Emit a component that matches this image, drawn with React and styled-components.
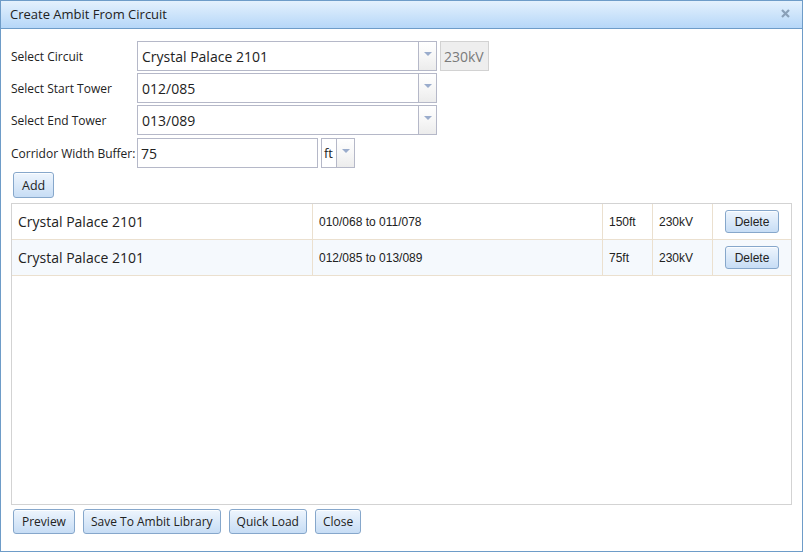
import React from "react";
import styled, { createGlobalStyle } from "styled-components";

const Global = createGlobalStyle`
  html, body { margin: 0; padding: 0; background: #ffffff; }
  * { box-sizing: border-box; }
`;

const Window = styled.div`
  width: 803px;
  height: 552px;
  border: 1px solid #6e9cc8;
  display: flex;
  flex-direction: column;
  background: #ffffff;
  font-family: "Open Sans", "Noto Sans", sans-serif;
  color: #222;
`;

const TitleBar = styled.div`
  height: 28px;
  flex: none;
  display: flex;
  align-items: center;
  justify-content: space-between;
  padding: 0 10px 1px 9px;
  background: linear-gradient(#e4f1fd, #b6d7f8);
  border-bottom: 1px solid #6e9cc8;
  font-size: 13px;
`;

const CloseX = styled.svg`
  width: 9px;
  height: 9px;
  margin-right: 2px;
  margin-top: -2px;
`;

const Body = styled.div`
  flex: 1;
  display: flex;
  flex-direction: column;
  padding: 12px 10px 17px 10px;
  min-height: 0;
`;

const FormRow = styled.div`
  display: flex;
  align-items: center;
  height: 30px;
  margin-bottom: ${(p) => p.$gap ?? 2}px;
`;

const Label = styled.div`
  width: 126px;
  flex: none;
  font-size: 12px;
  white-space: nowrap;
`;

const Field = styled.div`
  display: flex;
  width: ${(p) => p.$w}px;
  height: 30px;
  border: 1px solid #b5b8c8;
  background: #fff;
`;

const FieldText = styled.div`
  flex: 1;
  display: flex;
  align-items: center;
  padding-left: ${(p) => p.$pad ?? 4}px;
  font-size: ${(p) => p.$size ?? 14}px;
  white-space: nowrap;
  overflow: hidden;
`;

const Trigger = styled.div`
  width: 18px;
  flex: none;
  border-left: 1px solid #b5b8c8;
  background: linear-gradient(#ffffff 0%, #f7f7f7 50%, #ececec 100%);
  display: flex;
  justify-content: center;
  padding-top: 10px;
`;

const Arrow = () => (
  <svg width="8" height="4" viewBox="0 0 8 4">
    <path d="M0 0 L8 0 L4 4 Z" fill="#9aaccc" />
  </svg>
);

const Voltage = styled.div`
  margin-left: 3px;
  height: 30px;
  display: flex;
  align-items: center;
  padding: 0 4px 0 3px;
  background: #eeeeee;
  border: 1px solid #d2d2d2;
  color: #7a7a7a;
  font-size: 14px;
`;

const Unit = styled(Field)`
  margin-left: 3px;
`;

const Button = styled.button`
  font-family: ${(p) => (p.$arial ? '"Liberation Sans", Arial, sans-serif' : '"Open Sans", sans-serif')};
  font-size: ${(p) => p.$fs ?? 12}px;
  color: #222;
  height: ${(p) => p.$h ?? 25}px;
  padding: 0 ${(p) => p.$px ?? 8}px;
  border: 1px solid #86a7cb;
  border-radius: 3px;
  background: linear-gradient(#eef5fd, #c7ddf5);
  box-shadow: inset 0 1px 0 #fbfdff;
  cursor: pointer;
  white-space: nowrap;
`;

const AddRow = styled.div`
  margin: 4px 0 5px 2px;
  display: flex;
`;

const Grid = styled.div`
  flex: 1;
  border: 1px solid #d3d3d3;
  background: #fff;
  min-height: 0;
`;

const Row = styled.div`
  display: grid;
  grid-template-columns: 301px 290px 50px 60px 1fr;
  height: 36px;
  border-bottom: 1px solid #ebe0cf;
  background: ${(p) => (p.$alt ? "#f5f9fd" : "#ffffff")};
`;

const Cell = styled.div`
  display: flex;
  align-items: center;
  justify-content: ${(p) => (p.$center ? "center" : "flex-start")};
  padding-left: ${(p) => (p.$center ? 0 : 6)}px;
  border-right: ${(p) => (p.$last ? "none" : "1px solid #ebe0cf")};
  font-family: ${(p) => (p.$big ? '"Open Sans", sans-serif' : '"Liberation Sans", Arial, sans-serif')};
  font-size: ${(p) => (p.$big ? 14 : 12)}px;
  color: #222;
  white-space: nowrap;
`;

const Footer = styled.div`
  display: flex;
  gap: 8px;
  margin-top: 4px;
  padding-left: 2px;
`;

const rows = [
  { name: "Crystal Palace 2101", range: "010/068 to 011/078", buf: "150ft", kv: "230kV" },
  { name: "Crystal Palace 2101", range: "012/085 to 013/089", buf: "75ft", kv: "230kV" },
];

function Combo({ value, width }) {
  return (
    <Field $w={width}>
      <FieldText>{value}</FieldText>
      <Trigger>
        <Arrow />
      </Trigger>
    </Field>
  );
}

export default function App() {
  return (
    <>
      <Global />
      <Window>
        <TitleBar>
          <span>Create Ambit From Circuit</span>
          <CloseX viewBox="0 0 9 9">
            <path d="M1 1 L8 8 M8 1 L1 8" stroke="#8aa0b8" strokeWidth="2.2" />
          </CloseX>
        </TitleBar>
        <Body>
          <FormRow>
            <Label>Select Circuit</Label>
            <Combo value="Crystal Palace 2101" width={300} />
            <Voltage>230kV</Voltage>
          </FormRow>
          <FormRow>
            <Label>Select Start Tower</Label>
            <Combo value="012/085" width={300} />
          </FormRow>
          <FormRow $gap={3}>
            <Label>Select End Tower</Label>
            <Combo value="013/089" width={300} />
          </FormRow>
          <FormRow $gap={0}>
            <Label>Corridor Width Buffer:</Label>
            <Field $w={181}>
              <FieldText $pad={3}>75</FieldText>
            </Field>
            <Unit $w={34}>
              <FieldText $pad={2} $size={13}>ft</FieldText>
              <Trigger>
                <Arrow />
              </Trigger>
            </Unit>
          </FormRow>
          <AddRow>
            <Button $h={26} $fs={12.5}>Add</Button>
          </AddRow>
          <Grid>
            {rows.map((r, i) => (
              <Row key={i} $alt={i % 2 === 1}>
                <Cell $big>{r.name}</Cell>
                <Cell>{r.range}</Cell>
                <Cell>{r.buf}</Cell>
                <Cell>{r.kv}</Cell>
                <Cell $center $last>
                  <Button $arial $h={23} $px={9}>Delete</Button>
                </Cell>
              </Row>
            ))}
          </Grid>
          <Footer>
            <Button $px={8}>Preview</Button>
            <Button $px={7}>Save To Ambit Library</Button>
            <Button $px={7}>Quick Load</Button>
            <Button $px={7}>Close</Button>
          </Footer>
        </Body>
      </Window>
    </>
  );
}
